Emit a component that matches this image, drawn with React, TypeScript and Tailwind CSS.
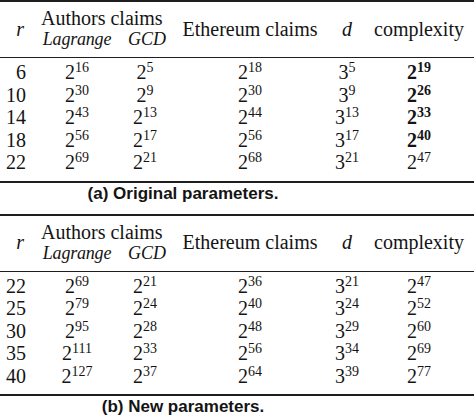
type Row = {
  r: number;
  lag: number;
  gcd: number;
  eth: number;
  d: number;
  cx: number;
  bold?: boolean;
};

const original: Row[] = [
  { r: 6, lag: 16, gcd: 5, eth: 18, d: 5, cx: 19, bold: true },
  { r: 10, lag: 30, gcd: 9, eth: 30, d: 9, cx: 26, bold: true },
  { r: 14, lag: 43, gcd: 13, eth: 44, d: 13, cx: 33, bold: true },
  { r: 18, lag: 56, gcd: 17, eth: 56, d: 17, cx: 40, bold: true },
  { r: 22, lag: 69, gcd: 21, eth: 68, d: 21, cx: 47 },
];

const updated: Row[] = [
  { r: 22, lag: 69, gcd: 21, eth: 36, d: 21, cx: 47 },
  { r: 25, lag: 79, gcd: 24, eth: 40, d: 24, cx: 52 },
  { r: 30, lag: 95, gcd: 28, eth: 48, d: 29, cx: 60 },
  { r: 35, lag: 111, gcd: 33, eth: 56, d: 34, cx: 69 },
  { r: 40, lag: 127, gcd: 37, eth: 64, d: 39, cx: 77 },
];

const cols = 'grid grid-cols-[34px_86px_50px_160px_34px_110px]';

function Pow({ base, exp, bold }: { base: number; exp: number; bold?: boolean }) {
  return (
    <span className={bold ? 'font-bold' : undefined}>
      {base}
      <span className="align-[7px] text-[14px] leading-[0]">{exp}</span>
    </span>
  );
}

function SubTable({ rows, caption, last }: { rows: Row[]; caption: string; last?: boolean }) {
  return (
    <div>
      <div className="h-[2px] bg-[#1e1e1e]" />

      <div className={`${cols} grid-rows-[21px_21px] pt-[6px] pb-[7px] leading-[21px]`}>
        <div className="row-span-2 self-center pr-[10px] text-right italic">r</div>
        <div className="col-span-2 pl-[7px] text-left">Authors claims</div>
        <div className="col-start-4 row-span-2 row-start-1 self-center text-center">Ethereum claims</div>
        <div className="col-start-5 row-span-2 row-start-1 self-center text-center italic">d</div>
        <div className="col-start-6 row-span-2 row-start-1 self-center text-center">complexity</div>
        <div className="col-start-2 row-start-2 text-center text-[18px] italic tracking-[-0.2px]">Lagrange</div>
        <div className="col-start-3 row-start-2 pr-[4px] text-right text-[18px] italic">GCD</div>
      </div>

      <div className="h-px bg-[#1e1e1e]" />

      <div className="pt-[3px] pb-[7px]">
        {rows.map((row) => (
          <div key={row.r + '-' + row.eth} className={`${cols} h-[22.5px] leading-[22.5px]`}>
            <div className="pr-[8px] text-right">{row.r}</div>
            <div className="text-center">
              <Pow base={2} exp={row.lag} />
            </div>
            <div className="text-center">
              <Pow base={2} exp={row.gcd} />
            </div>
            <div className="text-center">
              <Pow base={2} exp={row.eth} />
            </div>
            <div className="text-center">
              <Pow base={3} exp={row.d} />
            </div>
            <div className="text-center">
              <Pow base={2} exp={row.cx} bold={row.bold} />
            </div>
          </div>
        ))}
      </div>

      <div className="h-[2px] bg-[#1e1e1e]" />

      <p
        className={`w-[366px] pt-px text-center font-['Liberation_Sans',Arial,sans-serif] text-[17px] leading-[19px] font-bold ${
          last ? '' : 'mb-[11px]'
        }`}
      >
        {caption}
      </p>
    </div>
  );
}

export default function App() {
  return (
    <div className="w-[474px] overflow-hidden bg-white font-['Liberation_Serif','Times_New_Roman',serif] text-[20px] text-[#141414]">
      <SubTable rows={original} caption="(a) Original parameters." />
      <SubTable rows={updated} caption="(b) New parameters." last />
    </div>
  );
}
